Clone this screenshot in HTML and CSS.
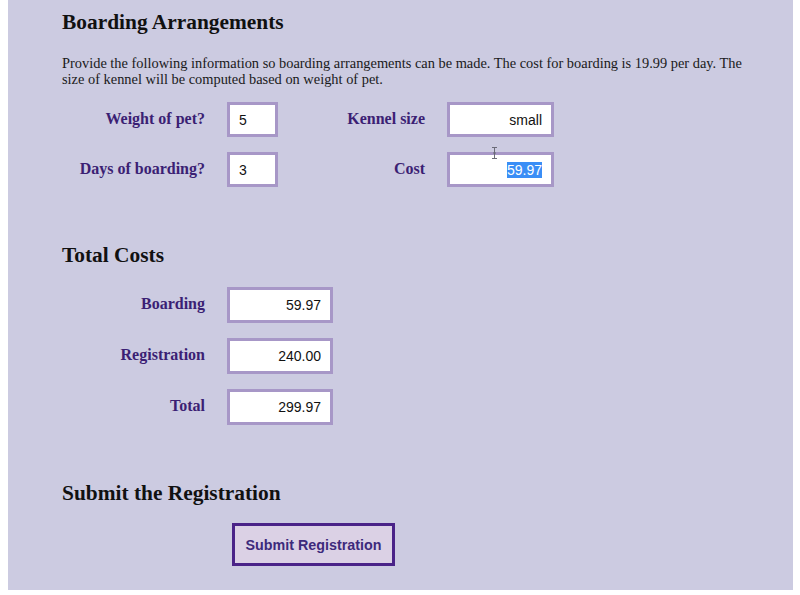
FILE: index.html
```html
<!DOCTYPE html>
<html lang="en">
<head>
<meta charset="utf-8">
<title>Boarding Arrangements</title>
<link rel="stylesheet" href="styles.css">
</head>
<body>
<main class="page">
  <section class="section">
    <h2 class="title">Boarding Arrangements</h2>
    <p class="intro">Provide the following information so boarding arrangements can be made. The cost for boarding is 19.99 per day. The size of kennel will be computed based on weight of pet.</p>
    <div class="board-grid">
      <label class="lbl" for="weight">Weight of pet?</label>
      <input class="field small-field" id="weight" type="text" value="5">
      <label class="lbl" for="kennel">Kennel size</label>
      <input class="field wide-field right" id="kennel" type="text" value="small">
      <label class="lbl" for="days">Days of boarding?</label>
      <input class="field small-field" id="days" type="text" value="3">
      <label class="lbl" for="cost">Cost</label>
      <div class="cost-wrap">
        <input class="field wide-field right" id="cost" type="text" value="59.97">
        <svg class="ibeam" width="7" height="12" viewBox="0 0 7 12"><path d="M1 0.5h5M3.5 0.5v11M1 11.5h5M2 6h3" stroke="#6b6b78" stroke-width="1" fill="none"/></svg>
      </div>
    </div>
  </section>

  <section class="section totals">
    <h2 class="title">Total Costs</h2>
    <div class="total-grid">
      <label class="lbl" for="tboard">Boarding</label>
      <input class="field total-field right" id="tboard" type="text" value="59.97">
      <label class="lbl" for="treg">Registration</label>
      <input class="field total-field right" id="treg" type="text" value="240.00">
      <label class="lbl" for="ttotal">Total</label>
      <input class="field total-field right" id="ttotal" type="text" value="299.97">
    </div>
  </section>

  <section class="section submit">
    <h2 class="title">Submit the Registration</h2>
    <div class="submit-row">
      <button class="submit-btn" type="button">Submit Registration</button>
    </div>
  </section>
</main>
<script src="script.js"></script>
</body>
</html>
```

FILE: styles.css
```css
html, body {
  margin: 0;
  padding: 0;
  background: #ffffff;
}
body {
  padding: 0 7px 0 8px;
  font-family: "Liberation Serif", "Times New Roman", serif;
}
.page {
  background: #cccbe1;
  height: 590px;
  box-sizing: border-box;
  padding: 10px 54px 0 54px;
}
.section {
  display: flex;
  flex-direction: column;
}
.title {
  margin: 0;
  font-size: 21.4px;
  font-weight: bold;
  color: #111111;
  line-height: 25px;
}
.intro {
  margin: 20px 0 0 0;
  font-size: 14.4px;
  line-height: 16px;
  color: #1a1a1a;
  width: 690px;
}
.board-grid {
  margin-top: 15px;
  display: grid;
  grid-template-columns: 143px 51px 125px 107px;
  column-gap: 22px;
  row-gap: 15px;
  align-items: center;
}
.total-grid {
  margin-top: 19px;
  display: grid;
  grid-template-columns: 143px 106px;
  column-gap: 22px;
  row-gap: 15px;
  align-items: center;
}
.lbl {
  text-align: right;
  font-weight: bold;
  font-size: 16px;
  color: #3b1f74;
  padding-bottom: 2px;
}
.field {
  box-sizing: border-box;
  height: 35px;
  border: 3px solid #a797c7;
  background: #ffffff;
  font-family: "Liberation Sans", Arial, sans-serif;
  font-size: 14px;
  color: #111111;
  padding: 0 9px;
  margin: 0;
  outline: none;
}
.small-field { width: 51px; }
.wide-field { width: 107px; }
.total-field { width: 106px; height: 36px; }
.right { text-align: right; }
.field::selection {
  background: #3a8ef6;
  color: #ffffff;
}
.cost-wrap {
  position: relative;
  height: 35px;
}
.ibeam {
  position: absolute;
  left: 44px;
  top: -5px;
}
.totals { margin-top: 56px; }
.submit { margin-top: 56px; }
.submit-row {
  margin-top: 17px;
  padding-left: 170px;
  display: flex;
}
.submit-btn {
  box-sizing: border-box;
  width: 163px;
  height: 43px;
  border: 3px solid #4a2388;
  background: #dbd1e5;
  color: #3d2a7c;
  font-family: "Liberation Sans", Arial, sans-serif;
  font-weight: bold;
  font-size: 14.3px;
  padding: 0;
}
```

FILE: script.js
```js
var cost = document.getElementById('cost');
cost.focus();
cost.setSelectionRange(0, cost.value.length);
```
